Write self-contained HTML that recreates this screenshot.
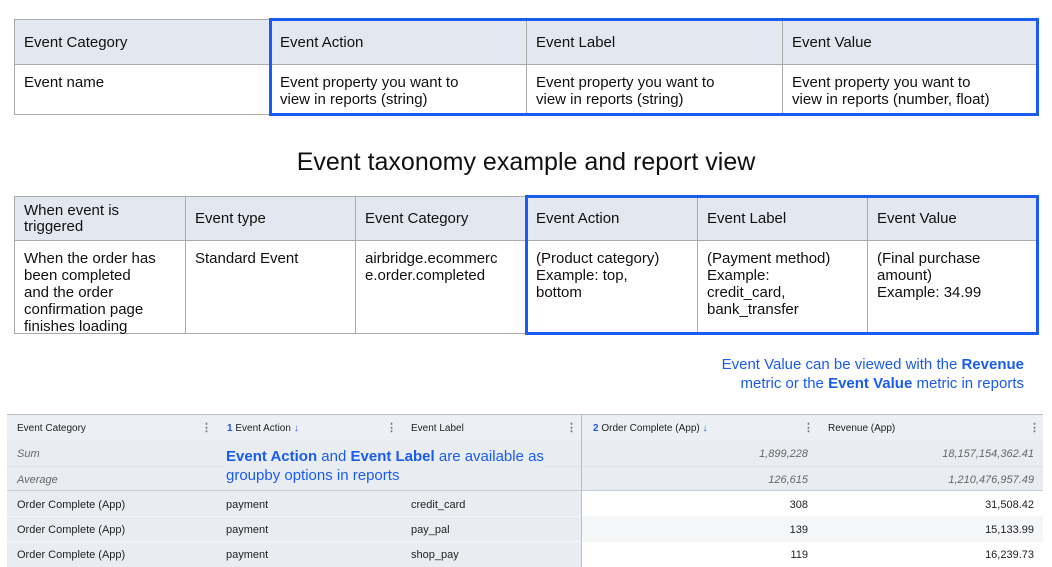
<!DOCTYPE html><html><head><style>
body{margin:0;width:1052px;height:567px;background:#fff;font-family:"Liberation Sans",sans-serif;color:#111;position:relative;overflow:hidden}
.a{position:absolute;box-sizing:border-box}
.c{position:absolute;box-sizing:border-box;border:1px solid #aaa;padding:9px 9px 8px;font-size:15px;line-height:17px;white-space:nowrap}
.h{background:#e3e7ef}
.blue{position:absolute;border:3px solid #1a5cf0;box-sizing:border-box}
.t{position:absolute;font-size:10px;color:#222}
.r{position:absolute;font-size:11px;color:#222}
.i{font-style:italic;color:#666}
.k{position:absolute;color:#777;font-size:11px;font-weight:bold}
</style></head><body>
<!-- table 1 -->
<div class="c h" style="left:14px;top:19px;width:257px;height:46px;padding-top:14px">Event Category</div>
<div class="c h" style="left:270px;top:19px;width:257px;height:46px;padding-top:14px">Event Action</div>
<div class="c h" style="left:526px;top:19px;width:257px;height:46px;padding-top:14px">Event Label</div>
<div class="c h" style="left:782px;top:19px;width:256px;height:46px;padding-top:14px">Event Value</div>
<div class="c" style="left:14px;top:64px;width:257px;height:51px">Event name</div>
<div class="c" style="left:270px;top:64px;width:257px;height:51px">Event property you want to<br>view in reports (string)</div>
<div class="c" style="left:526px;top:64px;width:257px;height:51px">Event property you want to<br>view in reports (string)</div>
<div class="c" style="left:782px;top:64px;width:256px;height:51px">Event property you want to<br>view in reports (number, float)</div>
<div class="blue" style="left:269px;top:18px;width:770px;height:98px"></div>
<div class="a" style="left:0;width:1052px;top:148px;text-align:center;font-size:25px">Event taxonomy example and report view</div>
<!-- table 2 -->
<div class="c h" style="left:14px;top:196px;width:172px;height:45px;padding-top:6px;line-height:16px">When event is<br>triggered</div>
<div class="c h" style="left:185px;top:196px;width:171px;height:45px;padding-top:13px">Event type</div>
<div class="c h" style="left:355px;top:196px;width:172px;height:45px;padding-top:13px">Event Category</div>
<div class="c h" style="left:526px;top:196px;width:172px;height:45px;padding-top:13px">Event Action</div>
<div class="c h" style="left:697px;top:196px;width:171px;height:45px;padding-top:13px">Event Label</div>
<div class="c h" style="left:867px;top:196px;width:171px;height:45px;padding-top:13px">Event Value</div>
<div class="c" style="left:14px;top:240px;width:172px;height:94px;padding-top:9px">When the order has<br>been completed<br>and the order<br>confirmation page<br>finishes loading</div>
<div class="c" style="left:185px;top:240px;width:171px;height:94px">Standard Event</div>
<div class="c" style="left:355px;top:240px;width:172px;height:94px">airbridge.ecommerc<br>e.order.completed</div>
<div class="c" style="left:526px;top:240px;width:172px;height:94px">(Product category)<br>Example: top,<br>bottom</div>
<div class="c" style="left:697px;top:240px;width:171px;height:94px">(Payment method)<br>Example:<br>credit_card,<br>bank_transfer</div>
<div class="c" style="left:867px;top:240px;width:171px;height:94px">(Final purchase<br>amount)<br>Example: 34.99</div>
<div class="blue" style="left:525px;top:195px;width:514px;height:140px"></div>
<div class="a" style="right:28px;top:355px;text-align:right;color:#1a5cf0;font-size:15px;line-height:19px">Event Value can be viewed with the <b>Revenue</b><br>metric or the <b>Event Value</b> metric in reports</div>
<!-- bottom grid -->
<div class="a" style="left:7px;top:414px;width:1036px;height:153px;background:#fff;border-top:1px solid #b8bec8"></div>
<div class="a" style="left:7px;top:415px;width:1036px;height:25px;background:#eceff3"></div>
<div class="a" style="left:7px;top:440px;width:1036px;height:51px;background:#e9edf2;border-bottom:1px solid #c8ccd4"></div>
<div class="a" style="left:7px;top:466px;width:1036px;height:1px;background:#dde1e7"></div>
<div class="a" style="left:7px;top:491px;width:574px;height:76px;background:#e9edf2"></div>
<div class="a" style="left:581px;top:516px;width:462px;height:25px;background:#f5f6f8"></div>
<div class="a" style="left:7px;top:516px;width:1036px;height:1px;background:#f4f5f7"></div>
<div class="a" style="left:7px;top:541px;width:1036px;height:1px;background:#f4f5f7"></div>
<div class="a" style="left:581px;top:414px;width:1px;height:153px;background:#b8bec8"></div>
<div class="t" style="left:17px;top:423px">Event Category</div>
<div class="k" style="left:201px;top:421px">⋮</div>
<div class="t" style="left:227px;top:423px"><b style="color:#1a5cf0">1</b> Event Action <span style="color:#1a5cf0">↓</span></div>
<div class="k" style="left:386px;top:421px">⋮</div>
<div class="t" style="left:411px;top:423px">Event Label</div>
<div class="k" style="left:566px;top:421px">⋮</div>
<div class="t" style="left:593px;top:423px"><b style="color:#1a5cf0">2</b> Order Complete (App) <span style="color:#1a5cf0">↓</span></div>
<div class="k" style="left:803px;top:421px">⋮</div>
<div class="t" style="left:828px;top:423px">Revenue (App)</div>
<div class="k" style="left:1029px;top:421px">⋮</div>
<div class="r i" style="left:17px;top:448px">Sum</div>
<div class="r i" style="left:17px;top:474px">Average</div>
<div class="a" style="left:226px;top:447px;color:#1a5cf0;font-size:15px;line-height:19px;background:#e9edf2"><b>Event Action</b> and <b>Event Label</b> are available as<br>groupby options in reports</div>
<div class="r i" style="right:244px;top:448px">1,899,228</div>
<div class="r i" style="right:18px;top:448px">18,157,154,362.41</div>
<div class="r i" style="right:244px;top:474px">126,615</div>
<div class="r i" style="right:18px;top:474px">1,210,476,957.49</div>
<div class="r" style="left:17px;top:499px">Order Complete (App)</div><div class="r" style="left:226px;top:499px">payment</div><div class="r" style="left:411px;top:499px">credit_card</div><div class="r" style="right:244px;top:499px">308</div><div class="r" style="right:18px;top:499px">31,508.42</div>
<div class="r" style="left:17px;top:524px">Order Complete (App)</div><div class="r" style="left:226px;top:524px">payment</div><div class="r" style="left:411px;top:524px">pay_pal</div><div class="r" style="right:244px;top:524px">139</div><div class="r" style="right:18px;top:524px">15,133.99</div>
<div class="r" style="left:17px;top:549px">Order Complete (App)</div><div class="r" style="left:226px;top:549px">payment</div><div class="r" style="left:411px;top:549px">shop_pay</div><div class="r" style="right:244px;top:549px">119</div><div class="r" style="right:18px;top:549px">16,239.73</div>
</body></html>
